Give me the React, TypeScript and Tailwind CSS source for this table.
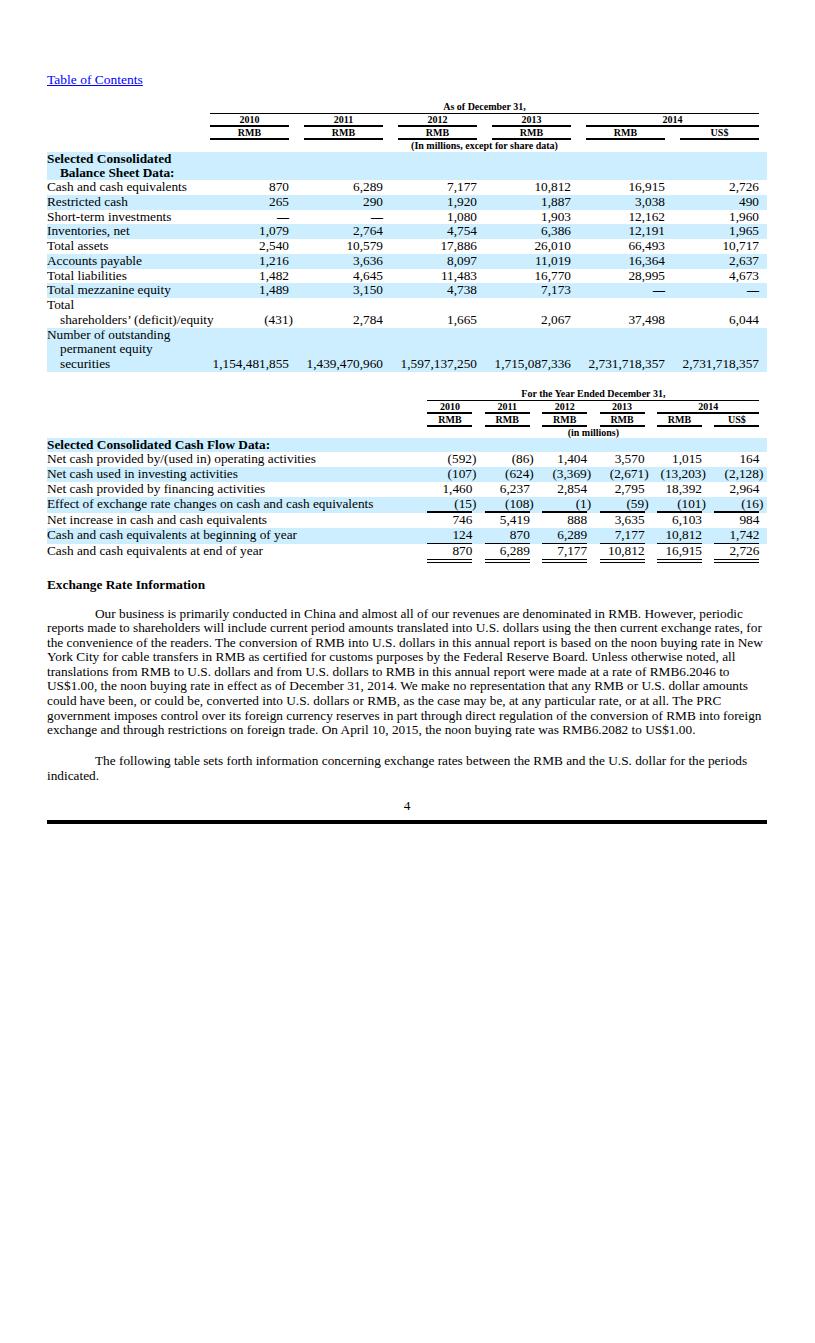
import React from 'react';

const serif = "font-['Liberation_Serif','Times_New_Roman',serif]";

type Row = { label: string[]; values: string[]; shade?: boolean; line?: 'thick' | 'thin' | 'double' };

const balanceRows: Row[] = [
  { label: ['Cash and cash equivalents'], values: ['870', '6,289', '7,177', '10,812', '16,915', '2,726'] },
  { label: ['Restricted cash'], values: ['265', '290', '1,920', '1,887', '3,038', '490'], shade: true },
  { label: ['Short-term investments'], values: ['—', '—', '1,080', '1,903', '12,162', '1,960'] },
  { label: ['Inventories, net'], values: ['1,079', '2,764', '4,754', '6,386', '12,191', '1,965'], shade: true },
  { label: ['Total assets'], values: ['2,540', '10,579', '17,886', '26,010', '66,493', '10,717'] },
  { label: ['Accounts payable'], values: ['1,216', '3,636', '8,097', '11,019', '16,364', '2,637'], shade: true },
  { label: ['Total liabilities'], values: ['1,482', '4,645', '11,483', '16,770', '28,995', '4,673'] },
  { label: ['Total mezzanine equity'], values: ['1,489', '3,150', '4,738', '7,173', '—', '—'], shade: true },
  { label: ['Total', 'shareholders’ (deficit)/equity'], values: ['(431)', '2,784', '1,665', '2,067', '37,498', '6,044'] },
  {
    label: ['Number of outstanding', 'permanent equity', 'securities'],
    values: ['1,154,481,855', '1,439,470,960', '1,597,137,250', '1,715,087,336', '2,731,718,357', '2,731,718,357'],
    shade: true,
  },
];

const cashRows: Row[] = [
  { label: ['Net cash provided by/(used in) operating activities'], values: ['(592)', '(86)', '1,404', '3,570', '1,015', '164'] },
  { label: ['Net cash used in investing activities'], values: ['(107)', '(624)', '(3,369)', '(2,671)', '(13,203)', '(2,128)'], shade: true },
  { label: ['Net cash provided by financing activities'], values: ['1,460', '6,237', '2,854', '2,795', '18,392', '2,964'] },
  { label: ['Effect of exchange rate changes on cash and cash equivalents'], values: ['(15)', '(108)', '(1)', '(59)', '(101)', '(16)'], shade: true, line: 'thick' },
  { label: ['Net increase in cash and cash equivalents'], values: ['746', '5,419', '888', '3,635', '6,103', '984'] },
  { label: ['Cash and cash equivalents at beginning of year'], values: ['124', '870', '6,289', '7,177', '10,812', '1,742'], shade: true, line: 'thin' },
  { label: ['Cash and cash equivalents at end of year'], values: ['870', '6,289', '7,177', '10,812', '16,915', '2,726'], line: 'double' },
];

function Num({ v }: { v: string }) {
  // closing parenthesis hangs past the column edge
  if (v.startsWith('(')) return <span className="inline-block -mr-[4px]">{v}</span>;
  if (v === '—') return <span className="text-[12px] font-bold">{v}</span>;
  return <span>{v}</span>;
}

function lineClass(line?: Row['line']) {
  if (line === 'thick') return 'border-b-2 border-black';
  if (line === 'thin') return 'border-b border-black';
  if (line === 'double') return 'border-b-4 border-double border-black';
  return '';
}

const paragraph = [
  'reports made to shareholders will include current period amounts translated into U.S. dollars using the then current exchange rates, for',
  'the convenience of the readers. The conversion of RMB into U.S. dollars in this annual report is based on the noon buying rate in New',
  'York City for cable transfers in RMB as certified for customs purposes by the Federal Reserve Board. Unless otherwise noted, all',
  'translations from RMB to U.S. dollars and from U.S. dollars to RMB in this annual report were made at a rate of RMB6.2046 to',
  'US$1.00, the noon buying rate in effect as of December 31, 2014. We make no representation that any RMB or U.S. dollar amounts',
  'could have been, or could be, converted into U.S. dollars or RMB, as the case may be, at any particular rate, or at all. The PRC',
  'government imposes control over its foreign currency reserves in part through direct regulation of the conversion of RMB into foreign',
  'exchange and through restrictions on foreign trade. On April 10, 2015, the noon buying rate was RMB6.2082 to US$1.00.',
];

export default function App() {
  return (
    <div className={`w-[815px] min-h-[1343px] bg-white pl-[47px] pr-[48px] pt-[72px] text-black ${serif}`}>
      <div className="text-[13.5px] leading-[15px]">
        <a href="#" className="text-[#0000ff] underline">
          Table of Contents
        </a>
      </div>

      {/* Balance sheet */}
      <div className="mt-[14px] grid grid-cols-[148px_repeat(6,79px)] gap-x-[15px] pr-[8px] text-[10px] font-bold leading-[11px]">
        <div className="col-start-2 col-span-6 border-b border-black text-center leading-[12px]">As of December 31,</div>
        <div className="col-start-2 border-b-2 border-black text-center">2010</div>
        <div className="border-b-2 border-black text-center">2011</div>
        <div className="border-b-2 border-black text-center">2012</div>
        <div className="border-b-2 border-black text-center">2013</div>
        <div className="col-span-2 border-b-2 border-black text-center">2014</div>
        <div className="col-start-2 border-b-2 border-black text-center">RMB</div>
        <div className="border-b-2 border-black text-center">RMB</div>
        <div className="border-b-2 border-black text-center">RMB</div>
        <div className="border-b-2 border-black text-center">RMB</div>
        <div className="border-b-2 border-black text-center">RMB</div>
        <div className="border-b-2 border-black text-center">US$</div>
        <div className="col-start-2 col-span-6 text-center">(In millions, except for share data)</div>
      </div>

      <div className="mt-[1px] text-[13.3px]">
        <div className="bg-[#cceeff] font-bold leading-[14px]">
          <div>Selected Consolidated</div>
          <div className="pl-[13px]">Balance Sheet Data:</div>
        </div>
        {balanceRows.map(r => (
          <div
            key={r.label.join(' ')}
            className={`grid grid-cols-[148px_repeat(6,79px)] items-end gap-x-[15px] pr-[8px] leading-[14.75px] ${r.shade ? 'bg-[#cceeff]' : ''}`}
          >
            <div className="whitespace-nowrap">
              {r.label.map((l, i) => (
                <div key={l} className={i > 0 ? 'pl-[13px]' : ''}>{l}</div>
              ))}
            </div>
            {r.values.map((v, i) => (
              <div key={i} className="whitespace-nowrap text-right">
                <Num v={v} />
              </div>
            ))}
          </div>
        ))}
      </div>

      {/* Cash flow */}
      <div className="mt-[16px] grid grid-cols-[368px_repeat(6,45px)] gap-x-[12.4px] text-[10px] font-bold leading-[11px]">
        <div className="col-start-2 col-span-6 border-b border-black text-center leading-[12px]">For the Year Ended December 31,</div>
        <div className="col-start-2 border-b-2 border-black text-center">2010</div>
        <div className="border-b-2 border-black text-center">2011</div>
        <div className="border-b-2 border-black text-center">2012</div>
        <div className="border-b-2 border-black text-center">2013</div>
        <div className="col-span-2 border-b-2 border-black text-center">2014</div>
        <div className="col-start-2 border-b-2 border-black text-center">RMB</div>
        <div className="border-b-2 border-black text-center">RMB</div>
        <div className="border-b-2 border-black text-center">RMB</div>
        <div className="border-b-2 border-black text-center">RMB</div>
        <div className="border-b-2 border-black text-center">RMB</div>
        <div className="border-b-2 border-black text-center">US$</div>
        <div className="col-start-2 col-span-6 text-center">(in millions)</div>
      </div>

      <div className="text-[13.3px]">
        <div className="bg-[#cceeff] font-bold leading-[14.5px]">Selected Consolidated Cash Flow Data:</div>
        {cashRows.map(r => (
          <div
            key={r.label[0]}
            className={`grid grid-cols-[368px_repeat(6,45px)] gap-x-[12.4px] pr-[8px] leading-[14.75px] ${r.shade ? 'bg-[#cceeff]' : ''}`}
          >
            <div className="whitespace-nowrap">{r.label[0]}</div>
            {r.values.map((v, i) => (
              <div key={i} className={`whitespace-nowrap text-right ${lineClass(r.line)}`}>
                <Num v={v} />
              </div>
            ))}
          </div>
        ))}
      </div>

      {/* Exchange rate text */}
      <div className="mt-[14px] text-[13.3px] font-bold leading-[15px]">Exchange Rate Information</div>

      <div className="mt-[15px] text-[13.3px] leading-[14.6px]">
        <div className="whitespace-nowrap pl-[48px]">
          Our business is primarily conducted in China and almost all of our revenues are denominated in RMB. However, periodic
        </div>
        {paragraph.map(l => (
          <div key={l} className="whitespace-nowrap">{l}</div>
        ))}
      </div>

      <div className="mt-[15px] text-[13.3px] leading-[15px]">
        <div className="whitespace-nowrap pl-[48px]">
          The following table sets forth information concerning exchange rates between the RMB and the U.S. dollar for the periods
        </div>
        <div>indicated.</div>
      </div>

      <div className="mt-[15px] text-center text-[13.3px] leading-[15px]">4</div>
      <div className="mt-[7px] h-[4px] bg-black" />
    </div>
  );
}
